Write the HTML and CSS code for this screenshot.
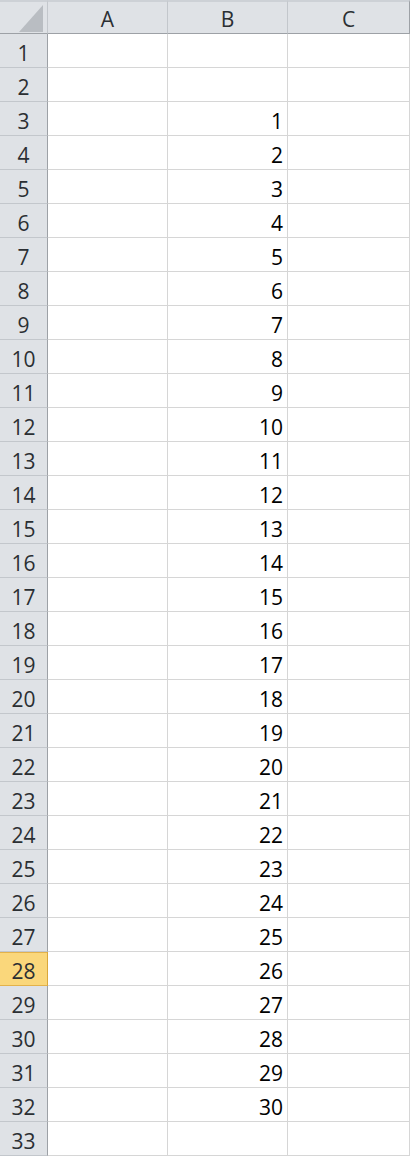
FILE: index.html
```html
<!DOCTYPE html>
<html lang="en">
<head>
<meta charset="utf-8">
<title>Sheet1</title>
<link rel="stylesheet" href="styles.css">
</head>
<body>
<div class="sheet" id="sheet">
  <div class="corner">
    <svg class="corner-tri" width="24" height="27" viewBox="0 0 24 27"><polygon points="0,27 24,0 24,27" fill="#b9bdc2"/></svg>
  </div>
  <div class="col-head">A</div>
  <div class="col-head">B</div>
  <div class="col-head last">C</div>
</div>
<script src="script.js"></script>
</body>
</html>
```
FILE: styles.css
```css
html, body {
  margin: 0;
  padding: 0;
  background: #ffffff;
}

.sheet {
  display: grid;
  grid-template-columns: 48px 120px 120px 122px;
  grid-auto-rows: 34px;
  font-family: "Open Sans", "Noto Sans", sans-serif;
  font-size: 21px;
  color: #000;
}

.corner,
.col-head,
.row-head,
.cell {
  box-sizing: border-box;
  border-right: 1px solid #d6d6d6;
  border-bottom: 1px solid #d6d6d6;
}

.corner {
  background: #dfe2e6;
  border-top: 2px solid #cdd1d6;
  border-right: 1px solid #c3c7cc;
  border-bottom: 1px solid #9da1a6;
  display: flex;
  align-items: flex-start;
  justify-content: flex-end;
  padding: 3px 4px 0 0;
}

.corner-tri {
  display: block;
}

.col-head {
  background: #dfe2e6;
  border-top: 2px solid #cdd1d6;
  border-right: 1px solid #c3c7cc;
  border-bottom: 1px solid #9da1a6;
  color: #2b2f33;
  display: flex;
  align-items: center;
  justify-content: center;
  padding-top: 3px;
}

.col-head.last {
  border-right-color: #9da1a6;
}

.row-head {
  background: #dfe2e6;
  border-right: 1px solid #9da1a6;
  border-bottom: 1px solid #c3c7cc;
  color: #2b2f33;
  display: flex;
  align-items: center;
  justify-content: center;
  padding-top: 5px;
}

.row-head.active {
  background: #fad77b;
  border-right-color: #d9a73a;
  border-bottom-color: #e3b24a;
  box-shadow: inset 0 1px 0 #e3b24a;
}

.cell {
  display: flex;
  align-items: center;
  justify-content: flex-end;
  padding: 5px 4px 0 0;
}

.cell.last {
  border-right-color: #d6d6d6;
}
```
FILE: script.js
```js
// Fill the grid: 33 rows, column B holds a running count starting in row 3.
(function () {
  var sheet = document.getElementById('sheet');
  var activeRow = 28;
  for (var r = 1; r <= 33; r++) {
    var head = document.createElement('div');
    head.className = 'row-head' + (r === activeRow ? ' active' : '');
    head.textContent = r;
    sheet.appendChild(head);
    for (var c = 0; c < 3; c++) {
      var cell = document.createElement('div');
      cell.className = 'cell' + (c === 2 ? ' last' : '');
      if (c === 1 && r >= 3 && r <= 32) {
        cell.textContent = r - 2;
      }
      sheet.appendChild(cell);
    }
  }
})();
```
